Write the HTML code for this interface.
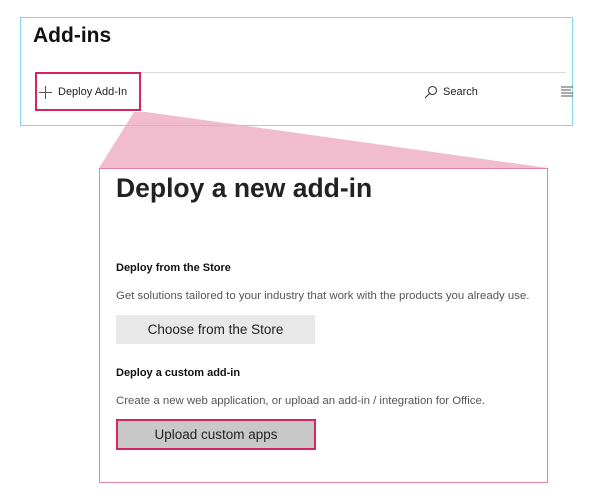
<!DOCTYPE html>
<html><head><style>
body{margin:0;width:613px;height:502px;background:#fff;font-family:"Liberation Sans",sans-serif;position:relative;overflow:hidden}
.a{position:absolute}
</style></head><body>
<svg class="a" style="left:0;top:0" width="613" height="502"><polygon points="134,112 146,112 548,168 99,168" fill="#f1bccd"/></svg>
<div class="a" style="left:20px;top:17px;width:551px;height:107px;border:1px solid #7fd8ec"></div>
<div class="a" style="left:33px;top:24px;font-size:21px;font-weight:bold;color:#111">Add-ins</div>
<div class="a" style="left:35px;top:72px;width:531px;height:1px;background:#ddd"></div>
<div class="a" style="left:35px;top:72px;width:102px;height:35px;border:2px solid #d6245e"></div>
<svg class="a" style="left:39px;top:86px" width="14" height="14"><g stroke="#555" stroke-width="1"><line x1="6.5" y1="0" x2="6.5" y2="13"/><line x1="0" y1="6.5" x2="13" y2="6.5"/></g></svg>
<div class="a" style="left:58px;top:86px;font-size:11px;color:#222">Deploy Add-In</div>
<svg class="a" style="left:424px;top:85px" width="14" height="14"><circle cx="8.5" cy="5.5" r="4" fill="none" stroke="#333" stroke-width="1.1"/><line x1="5.5" y1="8.5" x2="1" y2="13" stroke="#333" stroke-width="1.1"/></svg>
<div class="a" style="left:443px;top:86px;font-size:11px;color:#222">Search</div>
<svg class="a" style="left:561px;top:86px" width="14" height="12"><g stroke="#555"><line x1="0" y1="1" x2="12" y2="1"/><line x1="0" y1="4" x2="10" y2="4"/><line x1="0" y1="7" x2="12" y2="7"/><line x1="0" y1="10" x2="12" y2="10"/></g></svg>
<div class="a" style="left:99px;top:168px;width:447px;height:313px;border:1px solid #e682a4;background:#fff"></div>
<div class="a" style="left:116px;top:173px;font-size:26.5px;font-weight:bold;color:#222">Deploy a new add-in</div>
<div class="a" style="left:116px;top:262px;font-size:11px;font-weight:bold;color:#111">Deploy from the Store</div>
<div class="a" style="left:116px;top:290px;font-size:11.4px;color:#555">Get solutions tailored to your industry that work with the products you already use.</div>
<div class="a" style="left:116px;top:315px;width:199px;height:29px;background:#e8e8e8;font-size:13.5px;color:#222;text-align:center;line-height:29px">Choose from the Store</div>
<div class="a" style="left:116px;top:367px;font-size:11px;font-weight:bold;color:#111">Deploy a custom add-in</div>
<div class="a" style="left:116px;top:395px;font-size:11.4px;color:#555">Create a new web application, or upload an add-in / integration for Office.</div>
<div class="a" style="left:116px;top:419px;width:196px;height:27px;background:#c8c8c8;border:2px solid #d6245e;font-size:13.5px;color:#222;text-align:center;line-height:27px">Upload custom apps</div>
</body></html>
